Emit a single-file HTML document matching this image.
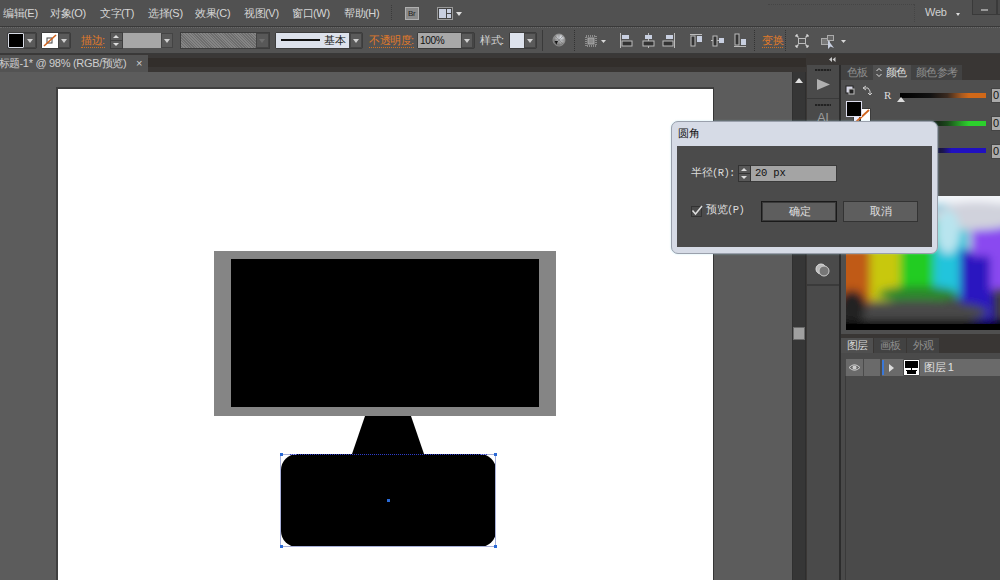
<!DOCTYPE html>
<html><head><meta charset="utf-8">
<style>
*{margin:0;padding:0;box-sizing:border-box}
html,body{width:1000px;height:580px;overflow:hidden;background:#535353;font-family:"Liberation Sans",sans-serif;font-size:11px;color:#d8d8d8}
.a{position:absolute}
.t{position:absolute;white-space:nowrap;line-height:13px;font-size:11px;color:#d6d6d6;letter-spacing:-0.3px}
.or{color:#e07a2a}
#menubar{left:0;top:0;width:1000px;height:27px;background:#515151;border-bottom:1px solid #393939}
#toolbar{left:0;top:27px;width:1000px;height:27px;background:#535353;border-bottom:1px solid #393939}
#tabbar{left:0;top:54px;width:807px;height:18px;background:linear-gradient(180deg,#3a3837 0,#3a3837 4px,#322e2b 4px,#322e2b 13px,#393634 13px)}
#tab1{left:0;top:55px;width:148px;height:17px;background:#535353}
#canvas{left:0;top:72px;width:792px;height:508px;background:#5c5c5c}
#artboard{left:56px;top:87px;width:658px;height:500px;background:#fff;border-left:2px solid #404040;border-top:2px solid #404040;border-right:1px solid #353535}
#scroll{left:792px;top:72px;width:15px;height:508px;background:#363636;border-left:1px solid #303030;border-right:2px solid #2e2e2e}
#toolsbg{left:806px;top:54px;width:35px;height:526px;background:#3a3735}
.tbtn{position:absolute;left:807px;width:32px;background:#4a4a4a;border-bottom:1px solid #3a3a3a}
#rpanel{left:840px;top:54px;width:160px;height:526px;background:#393634}
.dd{position:absolute;width:12px;height:15px;background:#5a5a5a;border:1px solid #444}
.dd:after{content:"";position:absolute;left:2px;top:5px;border-left:3px solid transparent;border-right:3px solid transparent;border-top:4px solid #d0d0d0}
.ptab{position:absolute;height:15px;line-height:15px;font-size:11px;color:#8d8d8d;text-align:center;white-space:nowrap}
.c{display:inline-block;width:10.5px;font-style:normal;text-align:center;letter-spacing:0;overflow:visible}
</style></head><body>
<!-- MENU BAR -->
<div id="menubar" class="a">
 <div class="t" style="left:3px;top:7px"><i class="c">编</i><i class="c">辑</i>(E)</div>
 <div class="t" style="left:50px;top:7px"><i class="c">对</i><i class="c">象</i>(O)</div>
 <div class="t" style="left:100px;top:7px"><i class="c">文</i><i class="c">字</i>(T)</div>
 <div class="t" style="left:148px;top:7px"><i class="c">选</i><i class="c">择</i>(S)</div>
 <div class="t" style="left:195px;top:7px"><i class="c">效</i><i class="c">果</i>(C)</div>
 <div class="t" style="left:244px;top:7px"><i class="c">视</i><i class="c">图</i>(V)</div>
 <div class="t" style="left:292px;top:7px"><i class="c">窗</i><i class="c">口</i>(W)</div>
 <div class="t" style="left:344px;top:7px"><i class="c">帮</i><i class="c">助</i>(H)</div>
 <div class="a" style="left:391px;top:5px;width:1px;height:15px;border-left:1px dotted #3a3a3a"></div>
 <!-- Br icon -->
 <div class="a" style="left:405px;top:7px;width:14px;height:13px;background:#8a8a8a;border:1px solid #b0b0b0"></div>
 <div class="t" style="left:408px;top:7px;font-size:8px;color:#222">Br</div>
 <!-- workspace icon -->
 <div class="a" style="left:437px;top:7px;width:16px;height:13px;background:#444;border:1px solid #999"></div>
 <div class="a" style="left:439px;top:9px;width:7px;height:9px;background:#c8cfe0"></div>
 <div class="a" style="left:447px;top:9px;width:4px;height:4px;background:#c8cfe0"></div>
 <div class="a" style="left:447px;top:14px;width:4px;height:4px;background:#c8cfe0"></div>
 <div class="a" style="left:456px;top:12px;border-left:3px solid transparent;border-right:3px solid transparent;border-top:4px solid #ddd"></div>
 <div class="a" style="left:768px;top:4px;width:146px;height:1px;border-top:1px dotted #454545"></div>
 <div class="a" style="left:914px;top:4px;width:1px;height:18px;border-left:1px dotted #454545"></div>
 <div class="t" style="left:925px;top:6px;color:#d0d0d0">Web</div>
 <div class="a" style="left:956px;top:13px;border-left:2px solid transparent;border-right:2px solid transparent;border-top:3px solid #ddd"></div>
 <div class="a" style="left:972px;top:0;width:25px;height:15px;background:#4a4a4a;border:1px solid #3a3a3a;border-top:none"></div>
 <div class="a" style="left:981px;top:9px;width:7px;height:2px;background:#999"></div>
 <div class="a" style="left:997px;top:0;width:5px;height:15px;background:#4a4a4a;border:1px solid #3a3a3a;border-top:none"></div>
</div>

<!-- TOOLBAR -->
<div id="toolbar" class="a">
 <div class="a" style="left:0;top:0;width:1000px;height:1px;border-top:1px dotted #6a6a6a"></div>
 <!-- fill swatch -->
 <div class="a" style="left:7px;top:5px;width:30px;height:17px;background:#464646;border:1px solid #3c3c3c;border-radius:2px"></div>
 <div class="a" style="left:8px;top:6px;width:16px;height:15px;background:#000;border:1px solid #d8dce6;border-radius:1px"></div>
 <div class="dd" style="left:24px;top:6px"></div>
 <!-- stroke swatch -->
 <div class="a" style="left:41px;top:5px;width:30px;height:17px;background:#464646;border:1px solid #3c3c3c;border-radius:2px"></div>
 <div class="a" style="left:42px;top:6px;width:16px;height:15px;background:#fff"></div>
 <svg class="a" style="left:42px;top:6px" width="16" height="15"><rect x="5" y="5" width="5" height="5" fill="none" stroke="#444" stroke-width="1"/><line x1="2" y1="13" x2="14" y2="2" stroke="#d2641e" stroke-width="1.6"/></svg>
 <div class="dd" style="left:58px;top:6px"></div>
 <div class="t or" style="left:81px;top:7px;border-bottom:1px dotted #d07020;height:14px"><i class="c">描</i><i class="c">边</i>:</div>
 <!-- spinner -->
 <div class="a" style="left:110px;top:5px;width:13px;height:17px;background:#5a5a5a;border:1px solid #3e3e3e"></div><div class="a" style="left:110px;top:13px;width:13px;height:1px;background:#3e3e3e"></div>
 <div class="a" style="left:113px;top:8px;border-left:3px solid transparent;border-right:3px solid transparent;border-bottom:3px solid #ddd"></div>
 <div class="a" style="left:113px;top:16px;border-left:3px solid transparent;border-right:3px solid transparent;border-top:3px solid #ddd"></div>
 <div class="a" style="left:123px;top:6px;width:38px;height:15px;background:#a7a7a7"></div>
 <div class="dd" style="left:161px;top:6px"></div>
 <!-- disabled dropdown -->
 <div class="a" style="left:180px;top:5px;width:90px;height:17px;background:#494949;border:1px solid #3c3c3c"></div>
 <div class="a" style="left:181px;top:6px;width:75px;height:15px;background:repeating-linear-gradient(45deg,#858585 0 1px,#6e6e6e 1px 2px)"></div>
 <div class="a" style="left:256px;top:6px;width:13px;height:15px;background:#585858;border:1px solid #444"></div><div class="a" style="left:259px;top:12px;border-left:3px solid transparent;border-right:3px solid transparent;border-top:4px solid #6e6e6e"></div>
 <!-- basic stroke -->
 <div class="a" style="left:275px;top:5px;width:88px;height:17px;background:#464646;border:1px solid #3c3c3c;border-radius:2px"></div>
 <div class="a" style="left:276px;top:6px;width:73px;height:15px;background:#dde2ec"></div>
 <div class="a" style="left:281px;top:12px;width:39px;height:2px;background:#111"></div>
 <div class="t" style="left:324px;top:7px;color:#222"><i class="c">基</i><i class="c">本</i></div>
 <div class="dd" style="left:350px;top:6px"></div>
 <div class="t or" style="left:369px;top:7px;border-bottom:1px dotted #d07020;height:14px"><i class="c">不</i><i class="c">透</i><i class="c">明</i><i class="c">度</i>:</div>
 <div class="a" style="left:417px;top:5px;width:58px;height:17px;background:#464646;border:1px solid #3c3c3c;border-radius:2px"></div>
 <div class="a" style="left:418px;top:6px;width:43px;height:15px;background:#a8a8a8"></div>
 <div class="t" style="left:420px;top:7px;color:#111;font-size:10px">100%</div>
 <div class="dd" style="left:461px;top:6px"></div>
 <div class="t" style="left:480px;top:7px"><i class="c">样</i><i class="c">式</i>:</div>
 <div class="a" style="left:509px;top:5px;width:28px;height:17px;background:#464646;border:1px solid #3c3c3c;border-radius:2px"></div>
 <div class="a" style="left:510px;top:6px;width:14px;height:15px;background:#dde2ec"></div>
 <div class="dd" style="left:524px;top:6px"></div>
 <div class="a" style="left:542px;top:3px;width:1px;height:21px;background:#3a3a3a"></div>
 <!-- recolor globe -->
 <svg class="a" style="left:551px;top:5px" width="16" height="16"><defs><radialGradient id="gl" cx="0.6" cy="0.35" r="0.7"><stop offset="0" stop-color="#e8ecf4"/><stop offset="0.6" stop-color="#9a9a9a"/><stop offset="1" stop-color="#555"/></radialGradient></defs><circle cx="8" cy="8" r="6" fill="url(#gl)" stroke="#999" stroke-width="0.8"/><path d="M8 2.5 L8 13.5 M2.5 8 L13.5 8 M4 4 L12 12 M12 4 L4 12" stroke="#6a6a6a" stroke-width="0.7" opacity="0.7"/><path d="M3.5 9 L7 9 L5.5 12.5z" fill="#151515"/></svg>
 <div class="a" style="left:574px;top:3px;width:1px;height:21px;border-left:1px dotted #333"></div>
 <!-- align icons -->
 <svg class="a" style="left:584px;top:5px" width="280" height="18">
  <g fill="none" stroke="#c8c8c8" stroke-width="1">
   <rect x="2" y="4" width="10" height="10" stroke-dasharray="1 1"/>
   <rect x="4" y="6" width="6" height="6" fill="#8a8a8a" stroke="#aaa"/>
  </g>
  <path d="M17 8 L22 8 L19.5 11z" fill="#d8d8d8"/>
  <!-- align left -->
  <g transform="translate(36,0)">
   <rect x="0" y="1" width="1" height="15" fill="#bbb"/>
   <rect x="2" y="3" width="7" height="4" fill="#c8cfe0"/>
   <rect x="2" y="9" width="10" height="5" fill="#333" stroke="#bbb"/>
  </g>
  <g transform="translate(59,0)">
   <rect x="5" y="1" width="1" height="15" fill="#bbb"/>
   <rect x="2" y="3" width="7" height="4" fill="#c8cfe0"/>
   <rect x="0" y="9" width="11" height="5" fill="#333" stroke="#bbb"/>
  </g>
  <g transform="translate(79,0)">
   <rect x="11" y="1" width="1" height="15" fill="#bbb"/>
   <rect x="3" y="3" width="7" height="4" fill="#c8cfe0"/>
   <rect x="0" y="9" width="10" height="5" fill="#333" stroke="#bbb"/>
  </g>
  <g transform="translate(106,0)">
   <rect x="0" y="2" width="12" height="1" fill="#bbb"/>
   <rect x="1" y="4" width="4" height="10" fill="#333" stroke="#bbb"/>
   <rect x="7" y="4" width="5" height="6" fill="#c8cfe0"/>
  </g>
  <g transform="translate(127,0)">
   <rect x="0" y="8" width="13" height="1" fill="#bbb"/>
   <rect x="2" y="4" width="4" height="10" fill="#333" stroke="#bbb"/>
   <rect x="8" y="6" width="5" height="5" fill="#c8cfe0"/>
  </g>
  <g transform="translate(150,0)">
   <rect x="0" y="14" width="12" height="1" fill="#bbb"/>
   <rect x="1" y="2" width="4" height="11" fill="#333" stroke="#bbb"/>
   <rect x="7" y="7" width="5" height="6" fill="#c8cfe0"/>
  </g>
 </svg>
 <div class="a" style="left:754px;top:3px;width:1px;height:21px;border-left:1px dotted #333"></div>
 <div class="t or" style="left:762px;top:7px;border-bottom:1px dotted #d07020;height:14px"><i class="c">变</i><i class="c">换</i></div>
 <div class="a" style="left:785px;top:3px;width:1px;height:21px;border-left:1px dotted #333"></div>
 <svg class="a" style="left:794px;top:5px" width="60" height="18">
  <rect x="4.5" y="6.5" width="7" height="5" fill="#555" stroke="#bbb"/>
  <path d="M2 3 L4.5 5.5 M14 3 L11.5 5.5 M2 15 L4.5 12.5 M14 15 L11.5 12.5" stroke="#ccc" stroke-width="1.2"/>
  <path d="M2 3 h2 M2 3 v2 M14 3 h-2 M14 3 v2 M2 15 h2 M2 15 v-2 M14 15 h-2 M14 15 v-2" stroke="#ddd" stroke-width="1"/>
  <rect x="27.5" y="6.5" width="8" height="6" fill="#777" stroke="#aaa"/>
  <rect x="33.5" y="3.5" width="6" height="5" fill="#666" stroke="#aaa"/>
  <path d="M34 8 L34 17 L36.5 14.5 L40 16z" fill="#c8cfe0"/>
  <path d="M47 8 L52 8 L49.5 11z" fill="#d8d8d8"/>
 </svg>
</div>

<!-- TAB BAR -->
<div id="tabbar" class="a"></div>
<div id="tab1" class="a" style="overflow:hidden">
 <div class="t" style="left:-12px;top:2px;color:#cfcfcf"><i class="c">未</i><i class="c">标</i><i class="c">题</i>-1* @ 98% (RGB/<i class="c">预</i><i class="c">览</i>)</div>
 <div class="t" style="left:136px;top:2px;color:#cfcfcf">×</div>
</div>

<!-- CANVAS -->
<div id="canvas" class="a"></div>
<div id="artboard" class="a"></div>
<!-- monitor drawing -->
<div class="a" style="left:214px;top:251px;width:342px;height:165px;background:#858585"></div>
<div class="a" style="left:231px;top:259px;width:308px;height:148px;background:#000"></div>
<svg class="a" style="left:0;top:0" width="1000" height="580">
 <polygon points="365,416 411,416 424,454 352,454" fill="#000"/>
 <rect x="281" y="454" width="215" height="93" rx="16" ry="16" fill="#000"/>
 <rect x="280.5" y="454.5" width="215" height="92" fill="none" stroke="#a8b0d8" stroke-width="1"/>
 <line x1="297" y1="454.5" x2="480" y2="454.5" stroke="#000" stroke-width="1"/>
 <line x1="290" y1="454.5" x2="488" y2="454.5" stroke="#2d3cc8" stroke-width="1" stroke-dasharray="1 1"/>
 <rect x="280" y="453" width="3" height="3" fill="#2a6ad6"/>
 <rect x="494" y="453" width="3" height="3" fill="#2a6ad6"/>
 <rect x="280" y="545" width="3" height="3" fill="#2a6ad6"/>
 <rect x="494" y="545" width="3" height="3" fill="#2a6ad6"/>
 <rect x="387" y="499" width="3" height="3" fill="#2a6ad6"/>
</svg>

<!-- SCROLLBAR -->
<div id="scroll" class="a"></div>
<div class="a" style="left:795px;top:78px;border-left:4px solid transparent;border-right:4px solid transparent;border-bottom:5px solid #e0e0e0"></div>
<div class="a" style="left:793px;top:327px;width:12px;height:13px;background:#a0a0a0;border:1px solid #6a6a6a"></div>

<!-- TOOLS PANEL -->
<div id="toolsbg" class="a"></div>
<svg class="a" style="left:829px;top:57px" width="8" height="6"><path d="M0 2.5 L3 0 L3 5z M3.5 2.5 L6.5 0 L6.5 5z" fill="#c8c8c8"/></svg>
<div class="tbtn" style="top:65px;height:34px"></div>
<div class="a" style="left:815px;top:69px;width:16px;height:2px;background:repeating-linear-gradient(90deg,#222 0 2px,#3a3a3a 2px 3px)"></div>
<svg class="a" style="left:807px;top:65px" width="32" height="34"><path d="M10 14 L23 19.5 L10 25z" fill="#b0b0b0"/></svg>
<div class="tbtn" style="top:99px;height:34px"></div>
<div class="a" style="left:815px;top:104px;width:16px;height:2px;background:repeating-linear-gradient(90deg,#222 0 2px,#3a3a3a 2px 3px)"></div>
<div class="t" style="left:817px;top:111px;font-size:13px;color:#9a9a9a">AI</div>
<div class="tbtn" style="top:253px;height:32px"></div>
<svg class="a" style="left:807px;top:253px" width="32" height="32"><circle cx="14" cy="16" r="5" fill="#bbb" stroke="#ddd"/><circle cx="17" cy="18" r="5" fill="#777" stroke="#ccc"/></svg>
<div class="a" style="left:807px;top:285px;width:32px;height:295px;background:#4a4a4a;border-top:1px solid #3a3a3a"></div>

<!-- RIGHT PANEL -->
<div id="rpanel" class="a"></div>
<div class="a" style="left:839px;top:65px;width:2px;height:515px;background:#2c2c2c"></div>
<div class="a" style="left:841px;top:65px;width:32px;height:15px;background:#424242"></div>
<div class="ptab" style="left:841px;top:65px;width:32px"><i class="c">色</i><i class="c">板</i></div>
<div class="a" style="left:873px;top:65px;width:38px;height:15px;background:#4f4f4f"></div>
<svg class="a" style="left:876px;top:67px" width="6" height="11"><path d="M0.5 4 L3 1.5 L5.5 4 M0.5 7 L3 9.5 L5.5 7" fill="none" stroke="#ddd" stroke-width="1"/></svg>
<div class="ptab" style="left:884px;top:65px;width:24px;color:#dcdcdc"><i class="c">颜</i><i class="c">色</i></div>
<div class="a" style="left:911px;top:65px;width:51px;height:15px;background:#424242"></div>
<div class="ptab" style="left:911px;top:65px;width:51px"><i class="c">颜</i><i class="c">色</i><i class="c">参</i><i class="c">考</i></div>
<div class="a" style="left:841px;top:80px;width:159px;height:254px;background:#4f4f4f"></div>
<!-- color icons -->
<svg class="a" style="left:844px;top:84px" width="30" height="40">
 <rect x="2" y="2" width="7" height="7" fill="#d8d8e8" stroke="#222"/>
 <rect x="5" y="5" width="5" height="5" fill="#222" stroke="#bbb"/>
 <path d="M19 4 L22 2 M19 4 L22 6 M19 4 L24 4 L26 7 L26 10 M24 9 L26 11 L28 9" stroke="#ccc" fill="none" stroke-width="1"/>
 <rect x="9.5" y="24.5" width="17" height="14" fill="#2a2a2a"/>
 <rect x="17" y="25" width="9" height="13" fill="#fff"/>
 <rect x="10" y="33" width="5" height="5" fill="#eef"/>
 <line x1="12" y1="38" x2="25" y2="26" stroke="#d2641e" stroke-width="1.8"/>
 <rect x="2.5" y="17.5" width="15" height="15" fill="#000" stroke="#dde" stroke-width="1"/>
</svg>
<div class="a" style="left:884px;top:90px;font-family:'Liberation Serif',serif;font-size:11px;color:#ddd;line-height:11px">R</div>
<div class="a" style="left:900px;top:93px;width:86px;height:5px;background:linear-gradient(90deg,#000 0%,#111 35%,#3a2a20 55%,#a85a20 72%,#d06818 80%,#d06818 100%)"></div>
<div class="a" style="left:897px;top:97px;border-left:4px solid transparent;border-right:4px solid transparent;border-bottom:5px solid #ddd"></div>
<div class="a" style="left:991px;top:88px;width:12px;height:15px;background:#aaa;border:1px solid #444"></div>
<div class="t" style="left:993px;top:89px;color:#111">0</div>
<div class="a" style="left:900px;top:121px;width:86px;height:5px;background:linear-gradient(90deg,#000 0%,#111 35%,#1a4a1a 55%,#28a828 72%,#2cd02c 80%,#2cd02c 100%)"></div>
<div class="a" style="left:991px;top:116px;width:12px;height:15px;background:#aaa;border:1px solid #444"></div>
<div class="t" style="left:993px;top:117px;color:#111">0</div>
<div class="a" style="left:900px;top:148px;width:86px;height:5px;background:linear-gradient(90deg,#000 0%,#111 35%,#1a1450 50%,#2010c0 60%,#2010c0 100%)"></div>
<div class="a" style="left:991px;top:144px;width:12px;height:15px;background:#aaa;border:1px solid #444"></div>
<div class="t" style="left:993px;top:145px;color:#111">0</div>
<!-- spectrum -->
<svg class="a" style="left:846px;top:196px" width="154" height="134">
 <defs><filter id="bl" x="-20%" y="-20%" width="140%" height="140%"><feGaussianBlur stdDeviation="4"/></filter>
 <clipPath id="cp"><rect x="0" y="0" width="154" height="134"/></clipPath></defs>
 <g clip-path="url(#cp)">
 <rect x="0" y="0" width="154" height="134" fill="#404040"/>
 <g filter="url(#bl)">
  <rect x="-10" y="-10" width="180" height="80" fill="#c4c6d4"/>
  <rect x="-10" y="20" width="36" height="90" fill="#c05a18"/>
  <rect x="24" y="20" width="34" height="85" fill="#c8c810"/>
  <rect x="54" y="20" width="40" height="80" fill="#24cc24"/>
  <rect x="88" y="-10" width="34" height="112" fill="#22c4dc"/>
  <rect x="114" y="54" width="34" height="76" fill="#2a12c0"/>
  <rect x="126" y="28" width="40" height="32" fill="#8a4af0"/>
  <rect x="144" y="50" width="20" height="44" fill="#8a4af0"/>
  <ellipse cx="72" cy="98" rx="40" ry="8" fill="#2a8a2a"/>
  <rect x="-10" y="-10" width="180" height="18" fill="#f4f6fa"/>
  <ellipse cx="130" cy="20" rx="44" ry="14" fill="#d0d2dc"/>
  <ellipse cx="102" cy="36" rx="12" ry="22" fill="#b8e4ee"/>
  <ellipse cx="70" cy="116" rx="72" ry="12" fill="#4a4a4a"/>
  <rect x="-10" y="124" width="180" height="20" fill="#000"/>
  <ellipse cx="6" cy="110" rx="14" ry="16" fill="#222"/>
 </g>
 <rect x="0" y="128" width="154" height="6" fill="#000"/>
 </g>
</svg>
<!-- layers -->
<div class="a" style="left:841px;top:338px;width:32px;height:15px;background:#4f4f4f"></div>
<div class="ptab" style="left:841px;top:338px;width:32px;color:#d8d8d8"><i class="c">图</i><i class="c">层</i></div>
<div class="a" style="left:874px;top:338px;width:32px;height:15px;background:#424242"></div>
<div class="ptab" style="left:874px;top:338px;width:32px"><i class="c">画</i><i class="c">板</i></div>
<div class="a" style="left:907px;top:338px;width:32px;height:15px;background:#424242"></div>
<div class="ptab" style="left:907px;top:338px;width:32px"><i class="c">外</i><i class="c">观</i></div>
<div class="a" style="left:841px;top:353px;width:159px;height:227px;background:#4a4a4a"></div>
<div class="a" style="left:845px;top:376px;width:1px;height:204px;background:#3a3a3a"></div>
<div class="a" style="left:846px;top:359px;width:154px;height:17px;background:#6a6a6a"></div>
<div class="a" style="left:863px;top:359px;width:1px;height:17px;background:#4b4b4b"></div>
<div class="a" style="left:880px;top:359px;width:2px;height:17px;background:#4b4b4b"></div>
<div class="a" style="left:882px;top:360px;width:2px;height:15px;background:#3a78d8"></div>
<svg class="a" style="left:846px;top:359px" width="17" height="17"><path d="M3 8.5 Q8.5 3 14 8.5 Q8.5 14 3 8.5z" fill="none" stroke="#ccc"/><circle cx="8.5" cy="8.5" r="2" fill="#ccc"/></svg>
<div class="a" style="left:889px;top:364px;border-top:4px solid transparent;border-bottom:4px solid transparent;border-left:5px solid #ddd"></div>
<svg class="a" style="left:903px;top:359px" width="17" height="17">
 <rect x="0.5" y="0.5" width="16" height="16" fill="#222"/>
 <rect x="1" y="1" width="15" height="15" fill="#fff"/>
 <rect x="2" y="2" width="13" height="7" fill="#000"/>
 <rect x="8" y="9" width="1" height="3" fill="#000"/>
 <rect x="3" y="11" width="11" height="1" fill="#000"/>
 <rect x="4" y="12" width="9" height="3" fill="#000"/>
</svg>
<div class="t" style="left:924px;top:361px;color:#e0e0e0"><i class="c">图</i><i class="c">层</i> 1</div>

<!-- DIALOG -->
<div class="a" style="left:671px;top:121px;width:267px;height:133px;background:#d6dbe6;border-radius:7px;border:1px solid #9aa0ac;box-shadow:0 0 2px rgba(160,220,240,0.6)"></div>
<div class="t" style="left:678px;top:127px;color:#111"><i class="c">圆</i><i class="c">角</i></div>
<div class="a" style="left:677px;top:146px;width:255px;height:101px;background:#4b4b4b"></div>
<div class="t" style="left:691px;top:167px;color:#ddd;font-family:'Liberation Mono',monospace;font-size:10.5px;letter-spacing:-0.6px"><i class="c">半</i><i class="c">径</i>(R):</div>
<div class="a" style="left:738px;top:165px;width:13px;height:17px;background:#585858;border:1px solid #333"></div><div class="a" style="left:738px;top:173px;width:13px;height:1px;background:#333"></div>
<div class="a" style="left:741px;top:168px;border-left:3px solid transparent;border-right:3px solid transparent;border-bottom:3px solid #ddd"></div>
<div class="a" style="left:741px;top:176px;border-left:3px solid transparent;border-right:3px solid transparent;border-top:3px solid #ddd"></div>
<div class="a" style="left:751px;top:165px;width:86px;height:17px;background:#a4a4a4;border:1px solid #3a3a3a;border-left:none"></div>
<div class="t" style="left:755px;top:167px;color:#111;font-family:'Liberation Mono',monospace;font-size:10.5px;letter-spacing:-0.2px">20 px</div>
<div class="a" style="left:691px;top:206px;width:11px;height:11px;background:#4a4a4a;border:1px solid #333"></div>
<svg class="a" style="left:690px;top:203px" width="14" height="14"><path d="M2.5 7.5 L5.5 11 L12 3" fill="none" stroke="#ddd" stroke-width="1.5"/></svg>
<div class="t" style="left:706px;top:204px;color:#ddd;font-family:'Liberation Mono',monospace;font-size:10.5px;letter-spacing:-0.6px"><i class="c">预</i><i class="c">览</i>(P)</div>
<div class="a" style="left:761px;top:201px;width:76px;height:21px;background:#5e5e5e;border:1px solid #1a1a1a;box-shadow:inset 0 0 0 1px #3a3a3a"></div>
<div class="t" style="left:789px;top:205px;color:#e0e0e0"><i class="c">确</i><i class="c">定</i></div>
<div class="a" style="left:843px;top:201px;width:75px;height:21px;background:#5e5e5e;border:1px solid #333"></div>
<div class="t" style="left:870px;top:205px;color:#e0e0e0"><i class="c">取</i><i class="c">消</i></div>
</body></html>
